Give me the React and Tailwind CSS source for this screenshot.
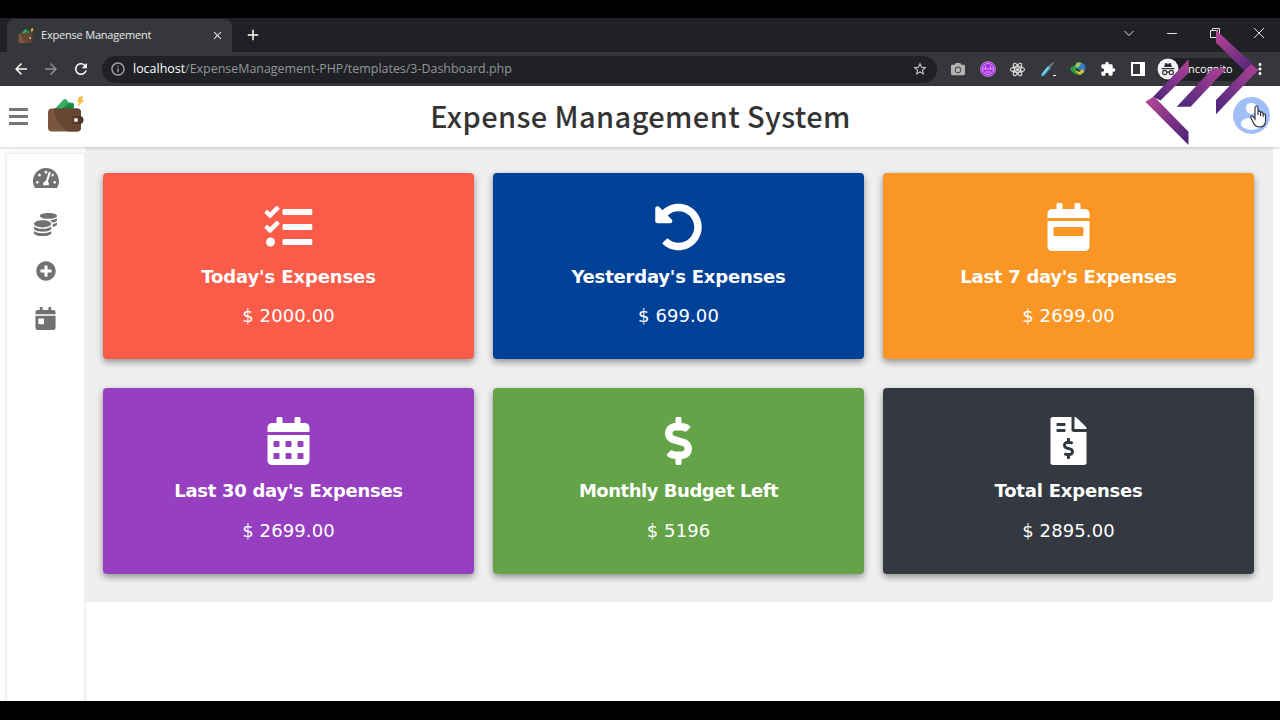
import React from 'react';
import {
  FaTasks, FaUndoAlt, FaCalendarWeek, FaCalendarAlt, FaDollarSign,
  FaFileInvoiceDollar, FaTachometerAlt, FaCoins, FaPlusCircle, FaCalendarDay,
  FaReact, FaCamera,
} from 'react-icons/fa';
import {
  MdArrowBack, MdArrowForward, MdRefresh, MdStarBorder, MdMoreVert,
  MdInfoOutline, MdAdd, MdClose, MdExtension,
} from 'react-icons/md';

const cards = [
  { label: "Today's Expenses", value: '$ 2000.00', icon: FaTasks, bg: 'bg-[#fa5c49]', tracking: 'tracking-[-0.12px]' },
  { label: "Yesterday's Expenses", value: '$ 699.00', icon: FaUndoAlt, bg: 'bg-[#004198]', tracking: 'tracking-[-0.2px]' },
  { label: "Last 7 day's Expenses", value: '$ 2699.00', icon: FaCalendarWeek, bg: 'bg-[#fa9625]', tracking: 'tracking-[-0.28px]' },
  { label: "Last 30 day's Expenses", value: '$ 2699.00', icon: FaCalendarAlt, bg: 'bg-[#963fc0]', tracking: 'tracking-[-0.28px]' },
  { label: 'Monthly Budget Left', value: '$ 5196', icon: FaDollarSign, bg: 'bg-[#64a348]', tracking: 'tracking-[-0.47px]' },
  { label: 'Total Expenses', value: '$ 2895.00', icon: FaFileInvoiceDollar, bg: 'bg-[#343840]', tracking: 'tracking-[-0.2px]' },
];

const nav = [
  { name: 'dashboard', icon: FaTachometerAlt, size: 26 },
  { name: 'expenses', icon: FaCoins, size: 23 },
  { name: 'add', icon: FaPlusCircle, size: 20 },
  { name: 'calendar', icon: FaCalendarDay, size: 23 },
];

export default function App() {
  return (
    <div className="relative w-[1280px] h-[720px] overflow-hidden bg-black pt-[18px] flex flex-col font-['Open_Sans',sans-serif]">
      <TabStrip />
      <Toolbar />
      <div className="h-[615px] shrink-0 bg-white flex flex-col overflow-hidden">
        <Header />
        <div className="flex flex-1">
          <Sidebar />
          <main className="w-[1188px] h-[455px] bg-[#efefef] pt-[26.4px] pl-[18px]">
            <div className="grid grid-cols-[371px_371px_371px] gap-x-[19px] gap-y-[28.2px]">
              {cards.map((card) => <Card key={card.label} {...card} />)}
            </div>
          </main>
        </div>
      </div>
      <Watermark />
      <Pointer />
    </div>
  );
}

function TabStrip() {
  return (
    <div className="h-[34px] shrink-0 bg-[#202124] flex items-end">
      <div className="ml-[7px] w-[225px] h-[33px] rounded-t-lg bg-[#36373a] flex items-center pl-[11px] pr-[8px]">
        <Wallet className="w-4 h-4" />
        <span className="ml-[7px] text-[11px] tracking-[-0.2px] text-[#e8eaed] whitespace-nowrap">Expense Management</span>
        <MdClose className="ml-auto text-[#e0e1e3]" size={13} />
      </div>
      <MdAdd className="ml-3 mb-2 text-white" size={18} />
      <div className="ml-auto mr-[15px] h-[34px] pb-[4px] flex items-center text-[#e4e4e4]">
        <svg width="12" height="12" viewBox="0 0 12 12" fill="none" stroke="currentColor"><path d="M1.500 4l4.500 4.500L10.500 4" /></svg>
        <svg className="ml-[31px]" width="12" height="12" viewBox="0 0 12 12" stroke="currentColor"><path d="M1 6.500h10" /></svg>
        <svg className="ml-[31px]" width="12" height="12" viewBox="0 0 12 12" fill="none" stroke="currentColor">
          <path d="M1.500 3.500h7v7h-7zM3.500 3.500v-2h7v7h-2" />
        </svg>
        <svg className="ml-[32px]" width="12" height="12" viewBox="0 0 12 12" stroke="currentColor"><path d="M1 1l10 10M11 1L1 11" /></svg>
      </div>
    </div>
  );
}

function Toolbar() {
  return (
    <div className="h-[34px] shrink-0 bg-[#36373a] flex items-center pl-3 text-white">
      <MdArrowBack size={18} />
      <MdArrowForward className="ml-3 text-[#8c8e91]" size={18} />
      <MdRefresh className="ml-3" size={18} />
      <div className="ml-3 w-[835px] h-[27px] rounded-full bg-[#202124] flex items-center pl-[8px] pr-[9px]">
        <MdInfoOutline className="text-[#a5a8ac]" size={16} />
        <span className="ml-[7px] text-[12.45px] whitespace-nowrap text-[#93979c]">
          <span className="text-white">localhost</span>/ExpenseManagement-PHP/templates/3-Dashboard.php
        </span>
        <MdStarBorder className="ml-auto text-[#c9cbce]" size={16} />
      </div>
      <div className="ml-[14px] flex items-center">
        <FaCamera className="text-[#b3b3b3]" size={14} />
        <svg className="ml-[15px]" width="16" height="16" viewBox="0 0 16 16" fill="none">
          <circle cx="8" cy="8" r="7.500" fill="#a52de0" stroke="#eab2ff" strokeWidth="0.600" />
          <circle cx="8" cy="8" r="5.500" stroke="#eab2ff" strokeWidth="0.800" />
          <path d="M5.500 5v3M10.500 5v3M3 8h10M5.500 11h5" stroke="#eab2ff" strokeWidth="0.900" />
        </svg>
        <FaReact className="ml-[14px] text-[#f1f1f1] stroke-[#f1f1f1] stroke-[14]" size={15} />
        <svg className="ml-[15px]" width="16" height="16" viewBox="0 0 16 16">
          <path d="M13 1l1 1-5 6-2-2z" fill="#73777d" />
          <path d="M8 5l3 2-7 8-3 .5.5-3z" fill="#3d9bce" />
          <path d="M8 6l1 .7-6 7-1-.5z" fill="#b8e4ef" />
          <path d="M13 14h3v1h-3z" fill="#fff" />
        </svg>
        <svg className="ml-[14px]" width="16" height="16" viewBox="0 0 16 16">
          <circle cx="10" cy="7" r="5.500" fill="#2e7fc6" />
          <path d="M6 2.500q3-2 5-.5l-2 4-4 1z" fill="#9fc75a" />
          <path d="M0 7l5-3 1 3 7 5-3 2Q2 14 0 7z" fill="#2e9e3d" />
          <path d="M4 7l5 3 4-2 1 3-4 3-4-3z" fill="#e2c02f" />
          <path d="M6 7l5 3-2 1-4-2z" fill="#23462c" />
        </svg>
        <MdExtension className="ml-[14px] text-white" size={16} />
        <svg className="ml-[15px]" width="14" height="14" viewBox="0 0 14 14">
          <path d="M1 1h12v12H1z" fill="none" stroke="#fff" strokeWidth="2" />
          <path d="M9 1h4v12H9z" fill="#fff" />
        </svg>
        <div className="ml-[12px] w-[90px] h-[23px] rounded-full bg-[#202124] flex items-center">
          <svg width="22" height="22" viewBox="0 0 22 22">
            <circle cx="11" cy="11" r="10.500" fill="#f1f3f4" />
            <path d="M7 9l1.300-4 2.700.7 2.700-.7L15 9zM4.500 10h13v1.200h-13z" fill="#303134" />
            <g fill="none" stroke="#303134" strokeWidth="1.200">
              <circle cx="7.700" cy="14.500" r="2.100" />
              <circle cx="14.300" cy="14.500" r="2.100" />
              <path d="M9.800 14.200q1.200-.8 2.400 0" />
            </g>
          </svg>
          <span className="ml-[6px] text-[11px] text-white">Incognito</span>
        </div>
        <MdMoreVert className="ml-[4px]" size={18} />
      </div>
    </div>
  );
}

function Header() {
  return (
    <header className="relative h-[61px] shrink-0 bg-white shadow-[0_1px_3px_rgba(0,0,0,0.2)] flex items-center">
      <div className="ml-[9px] -mt-px w-[19px] flex flex-col gap-[4px]">
        <span className="h-[3px] bg-[#777]" />
        <span className="h-[3px] bg-[#777]" />
        <span className="h-[3px] bg-[#777]" />
      </div>
      <Wallet className="ml-[19px] -mt-[4px] w-[38px] h-[38px]" />
      <h1 className="flex-1 -mt-[3px] pr-[37px] text-center text-[29px] leading-[48px] font-medium tracking-[0.4px] text-[#343434] font-['Noto_Sans_CJK_SC',sans-serif]">
        Expense Management System
      </h1>
      <svg className="mr-[10px] -mt-[3px]" width="37" height="37" viewBox="0 0 36 36">
        <circle cx="18" cy="18" r="18" fill="#a0bef8" />
        <circle cx="18" cy="11" r="5.500" fill="#fff" />
        <ellipse cx="18" cy="26" rx="10.500" ry="6" fill="#fff" />
      </svg>
    </header>
  );
}

function Sidebar() {
  return (
    <aside className="ml-[7px] mr-px mt-[7px] w-[77px] h-[560px] shrink-0 bg-white shadow-[0_0_4px_rgba(0,0,0,0.18)] pt-[12px] flex flex-col items-center gap-[22.7px] text-[#717171]">
      {nav.map(({ name, icon: Icon, size }) => (
        <div key={name} className="h-6 flex items-center"><Icon size={size} /></div>
      ))}
    </aside>
  );
}

function Card({ label, value, icon: Icon, bg, tracking }) {
  return (
    <div className={`${bg} h-[186px] rounded-[4px] shadow-[0_3px_7px_rgba(0,0,0,0.4)] pt-[29.6px] flex flex-col items-center text-white font-['DejaVu_Sans',sans-serif]`}>
      <Icon className="-translate-x-[0.5px]" size={48} />
      <div className={`${tracking} mt-[13px] text-[18px] leading-[26px] font-bold whitespace-nowrap`}>{label}</div>
      <div className="mt-[13.4px] text-[18px] leading-[26px] tracking-[0.1px] whitespace-nowrap">{value}</div>
    </div>
  );
}

function Wallet({ className }) {
  return (
    <svg className={className} viewBox="0 0 38 38">
      <path d="M6 15L16 4q2-2 4 0l1 2 5 1q1 0 1 2l-1 7z" fill="#36ad63" />
      <path d="M12 15l9-7q6-2 6 1l-1 7z" fill="#148945" />
      <path d="M32 1l4-1-1 4h2l-6 7 1-5h-2z" fill="#f4bd43" />
      <rect x="1" y="12.500" width="33" height="23" rx="4" fill="#79563d" />
      <path d="M7 12.500h23q4 0 4 4v15q0 4-4 4h-9Q8 28 7 12.500z" fill="#664632" />
      <rect x="25.500" y="20" width="11" height="8" rx="4" fill="#503729" />
      <circle cx="29" cy="24" r="2" fill="#fff" />
    </svg>
  );
}

function Watermark() {
  return (
    <svg className="absolute left-[1140px] top-[24px]" width="125" height="125" viewBox="0 0 125 125">
      <defs>
        <linearGradient id="down" x1="0" y1="0" x2="1" y2="1">
          <stop offset="0" stopColor="#bb4698" />
          <stop offset="1" stopColor="#482377" />
        </linearGradient>
        <linearGradient id="up" x1="1" y1="0" x2="0" y2="1">
          <stop offset="0" stopColor="#b14295" />
          <stop offset="1" stopColor="#49277c" />
        </linearGradient>
      </defs>
      <path d="M48.700 35.300v13.400L20.500 76.500 13 73z" fill="url(#up)" />
      <path d="M5.300 77.700l8.700-5.200 34.500 35.200V121z" fill="url(#down)" />
      <path d="M76 6l40 37-10 5L76 18.700z" fill="url(#down)" />
      <path d="M110.700 40.300l7.600 5.700L76 90.300V76z" fill="url(#up)" />
      <path d="M72.700 44.300h14L50.700 82.700h-14z" fill="url(#up)" />
    </svg>
  );
}

function Pointer() {
  return (
    <svg className="absolute left-[1249px] top-[105px]" width="19" height="24" viewBox="0 0 19 24">
      <path d="M6 14V3q0-2 1.500-2T9 3v7V7q0-1 1.200-1t1.300 1v4-3q0-1 1.200-1T14 8v4-2q0-1 1.200-1t1.300 1v6q0 6-6 6-4 0-6-4l-3-6q1-2 3 0z" fill="#fff" stroke="#252b36" strokeWidth="1.100" />
    </svg>
  );
}
